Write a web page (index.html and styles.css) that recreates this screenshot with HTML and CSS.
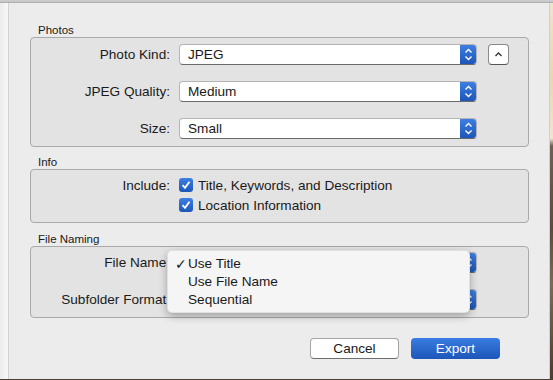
FILE: index.html
```html
<!DOCTYPE html>
<html lang="en">
<head>
  <meta charset="UTF-8">
  <title>Export Photos</title>
  <link rel="stylesheet" href="styles.css">
</head>
<body>
  <div class="screen">
    <div class="topbar"></div>
    <div class="middle">
      <div class="shade"></div>

      <div class="dialog">
        <!-- Photos -->
        <div class="section-title">Photos</div>
        <div class="group group-popups">
          <div class="row">
            <span class="field-label">Photo Kind:</span>
            <div class="popup">
              <span class="popup-value">JPEG</span>
              <span class="popup-arrows">
                <svg width="17" height="21" viewBox="0 0 17 21"><path d="M5.5 8.5 L8.5 5.5 L11.5 8.5 M5.5 12.5 L8.5 15.5 L11.5 12.5" fill="none" stroke="#fff" stroke-width="1.4"/></svg>
              </span>
            </div>
            <button class="disclosure">
              <svg width="11" height="7" viewBox="0 0 11 7"><path d="M2.5 5 L5.5 2 L8.5 5" fill="none" stroke="#333" stroke-width="1.3"/></svg>
            </button>
          </div>
          <div class="row">
            <span class="field-label">JPEG Quality:</span>
            <div class="popup">
              <span class="popup-value">Medium</span>
              <span class="popup-arrows">
                <svg width="17" height="21" viewBox="0 0 17 21"><path d="M5.5 8.5 L8.5 5.5 L11.5 8.5 M5.5 12.5 L8.5 15.5 L11.5 12.5" fill="none" stroke="#fff" stroke-width="1.4"/></svg>
              </span>
            </div>
          </div>
          <div class="row">
            <span class="field-label">Size:</span>
            <div class="popup">
              <span class="popup-value">Small</span>
              <span class="popup-arrows">
                <svg width="17" height="21" viewBox="0 0 17 21"><path d="M5.5 8.5 L8.5 5.5 L11.5 8.5 M5.5 12.5 L8.5 15.5 L11.5 12.5" fill="none" stroke="#fff" stroke-width="1.4"/></svg>
              </span>
            </div>
          </div>
        </div>

        <!-- Info -->
        <div class="section-title">Info</div>
        <div class="group group-info">
          <div class="check-row">
            <span class="field-label">Include:</span>
            <span class="checkbox">
              <svg width="14" height="14" viewBox="0 0 14 14"><path d="M3.5 7.2 L6 9.8 L10.5 3.8" fill="none" stroke="#fff" stroke-width="1.8"/></svg>
            </span>
            <span class="check-text">Title, Keywords, and Description</span>
          </div>
          <div class="check-row">
            <span class="field-label"></span>
            <span class="checkbox">
              <svg width="14" height="14" viewBox="0 0 14 14"><path d="M3.5 7.2 L6 9.8 L10.5 3.8" fill="none" stroke="#fff" stroke-width="1.8"/></svg>
            </span>
            <span class="check-text">Location Information</span>
          </div>
        </div>

        <!-- File Naming (values are covered by the open menu) -->
        <div class="section-title">File Naming</div>
        <div class="group group-naming">
          <div class="row">
            <span class="field-label">File Name:</span>
            <div class="popup">
              <span class="popup-value"></span>
              <span class="popup-arrows">
                <svg width="17" height="21" viewBox="0 0 17 21"><path d="M5.5 8.5 L8.5 5.5 L11.5 8.5 M5.5 12.5 L8.5 15.5 L11.5 12.5" fill="none" stroke="#fff" stroke-width="1.4"/></svg>
              </span>
            </div>
          </div>
          <div class="row">
            <span class="field-label">Subfolder Format:</span>
            <div class="popup">
              <span class="popup-value"></span>
              <span class="popup-arrows">
                <svg width="17" height="21" viewBox="0 0 17 21"><path d="M5.5 8.5 L8.5 5.5 L11.5 8.5 M5.5 12.5 L8.5 15.5 L11.5 12.5" fill="none" stroke="#fff" stroke-width="1.4"/></svg>
              </span>
            </div>
          </div>
        </div>

        <div class="actions">
          <button class="btn">Cancel</button>
          <button class="btn btn-primary">Export</button>
        </div>

        <!-- Open popup menu for File Name -->
        <div class="menu">
          <div class="menu-item"><span class="menu-check">&#10003;</span>Use Title</div>
          <div class="menu-item"><span class="menu-check"></span>Use File Name</div>
          <div class="menu-item"><span class="menu-check"></span>Sequential</div>
        </div>
      </div>

      <div class="photo"></div>
    </div>
    <div class="bottombar"></div>
  </div>
</body>
</html>
```

FILE: styles.css
```css
* {
  margin: 0;
  padding: 0;
  box-sizing: border-box;
}

body {
  width: 553px;
  height: 380px;
  overflow: hidden;
  font-family: 'Liberation Sans', Arial, sans-serif;
  font-size: 13.6px;
  color: #1a1a1a;
  background: #4b3f33;
}

.screen {
  display: flex;
  flex-direction: column;
  width: 553px;
  height: 380px;
}

/* Window frame bits around the sheet */
.topbar {
  height: 3px;
  background: linear-gradient(#cfcfcf, #c4c4c4 66%, #9c9c9c);
}

.middle {
  display: flex;
  height: 376px;
}

.shade {
  width: 9px;
  background: linear-gradient(to right, #ececec, #f8f8f8);
  border-right: 1px solid #d2d2d2;
}

.photo {
  width: 4px;
  border-left: 1px solid #cfcfcf;
  background: linear-gradient(#eee5cc 0, #e9d6ad 20%, #efe6cf 36%, #6d6155 38%, #5a4c3e 60%, #7b6a55 75%, #4a3d31 100%);
}

.bottombar {
  height: 1px;
  background: #4b3f33;
}

/* Sheet */
.dialog {
  position: relative;
  width: 540px;
  padding: 21px 20px 20px 21px;
  background: #ececec;
}

.section-title {
  font-size: 11.5px;
  line-height: 13px;
  padding-left: 8px;
  color: #1a1a1a;
}

.group {
  background: #e3e3e3;
  border: 1px solid #a9a9a9;
  border-radius: 4px;
  margin-bottom: 9px;
}

.group-popups {
  padding: 6px 0 7px;
  display: flex;
  flex-direction: column;
  gap: 16px;
}

.group-info {
  padding: 5px 0 7px;
  margin-bottom: 10px;
}

.group-naming {
  padding: 5px 0 7px;
  display: flex;
  flex-direction: column;
  gap: 16px;
  margin-bottom: 0;
}

.row {
  display: flex;
  align-items: center;
  height: 21px;
}

.field-label {
  width: 139px;
  margin-right: 9px;
  text-align: right;
  flex-shrink: 0;
}

/* Pop-up buttons */
.popup {
  display: flex;
  width: 298px;
  height: 21px;
  background: #fff;
  border: 1px solid #b4b4b4;
  border-bottom-color: #6a6a6a;
  border-radius: 4px;
  overflow: hidden;
}

.popup-value {
  flex: 1;
  padding-left: 8px;
  line-height: 19px;
}

.popup-arrows {
  width: 17px;
  margin: -1px -1px -1px 0;
  background: linear-gradient(#3f80e4, #1b54b6);
  display: flex;
  align-items: center;
  justify-content: center;
}

.disclosure {
  margin-left: 11px;
  width: 21px;
  height: 21px;
  background: #fff;
  border: 1px solid #8a8a8a;
  border-bottom-color: #555;
  border-radius: 4px;
  display: flex;
  align-items: center;
  justify-content: center;
}

/* Checkboxes */
.check-row {
  display: flex;
  align-items: center;
  height: 20px;
}

.checkbox {
  width: 14px;
  height: 14px;
  border-radius: 3px;
  background: linear-gradient(#3d7fe3, #1c57b9);
  display: flex;
  margin-right: 5px;
}

/* Buttons */
.actions {
  display: flex;
  justify-content: flex-end;
  gap: 12px;
  margin-top: 20px;
  padding-right: 29px;
}

.btn {
  width: 89px;
  height: 21px;
  font-family: 'Liberation Sans', Arial, sans-serif;
  font-size: 13.6px;
  color: #1a1a1a;
  background: #fff;
  border: 1px solid #a5a5a5;
  border-bottom-color: #6e6e6e;
  border-radius: 4px;
}

.btn-primary {
  color: #fff;
  border: none;
  background: linear-gradient(#3a7ce2, #1c56b8);
}

/* Open menu */
.menu {
  position: absolute;
  left: 158px;
  top: 247px;
  width: 303px;
  height: 63px;
  padding-top: 4px;
  background: #f5f5f5;
  border-radius: 5px;
  border: 1px solid rgba(0, 0, 0, 0.08);
  box-shadow: 0 3px 8px rgba(0, 0, 0, 0.3);
}

.menu-item {
  display: flex;
  height: 18px;
  line-height: 18px;
  padding-left: 7px;
}

.menu-check {
  width: 13px;
  font-family: 'DejaVu Sans', sans-serif;
  font-size: 14px;
}
```
